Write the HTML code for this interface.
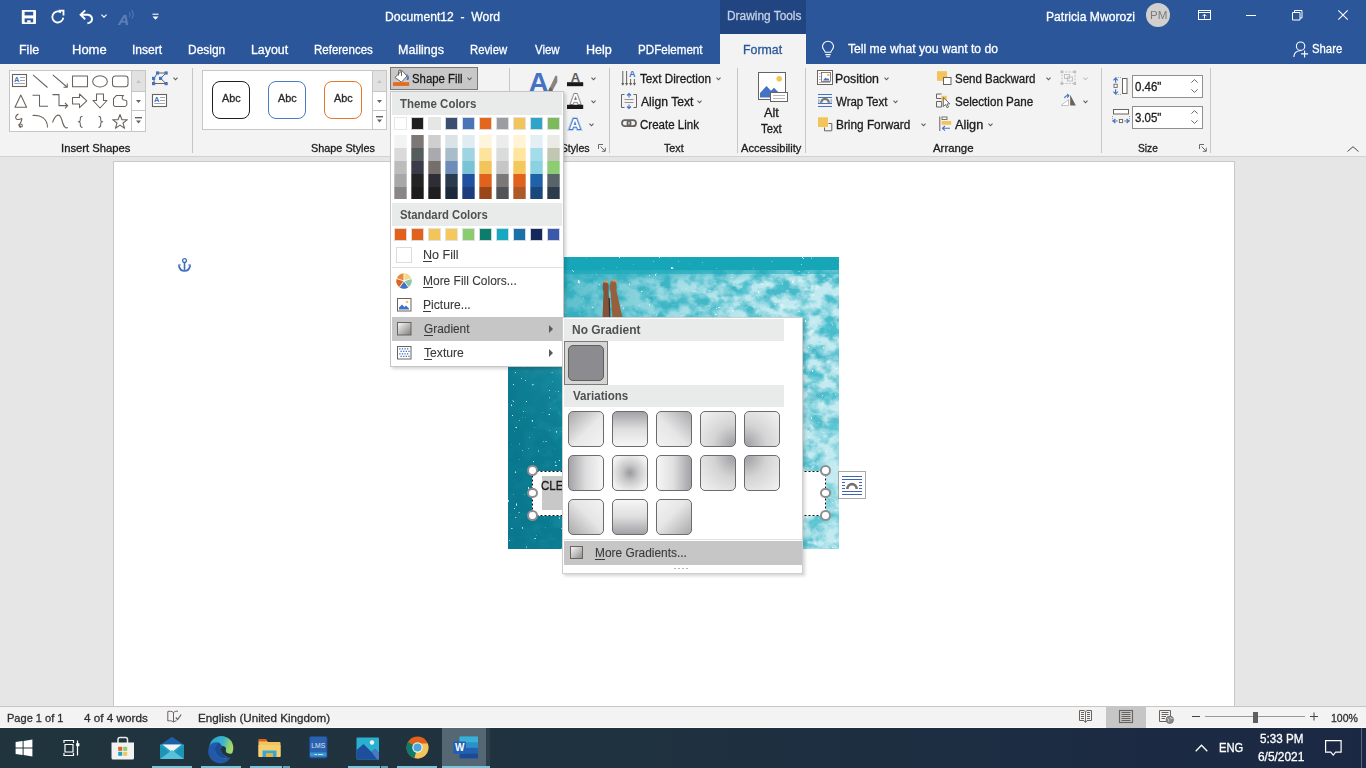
<!DOCTYPE html>
<html lang="en"><head><meta charset="utf-8"><title>Document12 - Word</title>
<style>
html,body{margin:0;padding:0;}
body{width:1366px;height:768px;overflow:hidden;position:relative;background:#e6e6e6;
font-family:"Liberation Sans",Arial,sans-serif;font-size:13px;color:#262626;}
div,span.t,svg.i{position:absolute;box-sizing:border-box;}
span.t{white-space:pre;transform-origin:0 50%;display:block;-webkit-text-stroke-width:0.300px;}
svg.i{overflow:visible;}
u{text-decoration:underline;text-underline-offset:1px;}
</style></head><body>
<div style="left:0px;top:0px;width:1366px;height:64px;background:#2b579a;"></div>
<div style="left:720px;top:0px;width:86px;height:34px;background:#214581;"></div>
<div style="left:720px;top:34px;width:86px;height:30px;background:#f3f3f3;"></div>
<div style="left:0px;top:64px;width:1366px;height:92px;background:#f3f3f3;"></div>
<div style="left:0px;top:156px;width:1366px;height:1px;background:#d2d2d2;"></div>
<div style="left:0px;top:157px;width:1366px;height:549px;background:#e6e6e6;"></div>
<div style="left:113px;top:161px;width:1122px;height:546px;background:#ffffff;border:1px solid #c8c8c8;border-bottom:0;"></div>
<div style="left:0px;top:706px;width:1366px;height:22px;background:#f3f3f3;border-top:1px solid #c6c6c6;"></div>
<div style="left:0px;top:727px;width:1366px;height:1px;background:#fbfbfb;"></div>
<div style="left:0px;top:728px;width:1366px;height:40px;background:linear-gradient(90deg,#20343e 0%,#1f323f 45%,#1c2c42 75%,#1b2844 100%);"></div>
<span class="t" style="left:385.31px;top:8.00px;font-size:13px;line-height:17px;color:#ffffff;font-weight:400;transform:scaleX(0.9326);">Document12  -  Word</span>
<span class="t" style="left:726.51px;top:8.30px;font-size:12px;line-height:16px;color:#c3cfe4;font-weight:400;transform:scaleX(0.9907);">Drawing Tools</span>
<span class="t" style="left:1046.31px;top:8.00px;font-size:13px;line-height:17px;color:#ffffff;font-weight:400;transform:scaleX(0.9332);">Patricia Mworozi</span>
<div style="left:1146px;top:3px;width:24px;height:24px;background:#d2d0ce;border-radius:50%;"></div>
<span class="t" style="left:1149.58px;top:8.00px;font-size:11px;line-height:15px;color:#7c7c7c;font-weight:400;transform:scaleX(1.0553);-webkit-text-stroke-width:0;">PM</span>
<span class="t" style="left:19.00px;top:41.65px;font-size:12.5px;line-height:16.5px;color:#ffffff;font-weight:400;transform:scaleX(0.9966);">File</span>
<span class="t" style="left:71.96px;top:41.65px;font-size:12.5px;line-height:16.5px;color:#ffffff;font-weight:400;transform:scaleX(1.0394);">Home</span>
<span class="t" style="left:131.91px;top:41.65px;font-size:12.5px;line-height:16.5px;color:#ffffff;font-weight:400;transform:scaleX(0.9647);">Insert</span>
<span class="t" style="left:188.04px;top:41.65px;font-size:12.5px;line-height:16.5px;color:#ffffff;font-weight:400;transform:scaleX(0.9578);">Design</span>
<span class="t" style="left:251.01px;top:41.65px;font-size:12.5px;line-height:16.5px;color:#ffffff;font-weight:400;transform:scaleX(0.9880);">Layout</span>
<span class="t" style="left:314.08px;top:41.65px;font-size:12.5px;line-height:16.5px;color:#ffffff;font-weight:400;transform:scaleX(0.9200);">References</span>
<span class="t" style="left:398.30px;top:41.65px;font-size:12.5px;line-height:16.5px;color:#ffffff;font-weight:400;transform:scaleX(1.0014);">Mailings</span>
<span class="t" style="left:470.40px;top:41.65px;font-size:12.5px;line-height:16.5px;color:#ffffff;font-weight:400;transform:scaleX(0.9050);">Review</span>
<span class="t" style="left:534.94px;top:41.65px;font-size:12.5px;line-height:16.5px;color:#ffffff;font-weight:400;transform:scaleX(0.9138);">View</span>
<span class="t" style="left:586.00px;top:41.65px;font-size:12.5px;line-height:16.5px;color:#ffffff;font-weight:400;transform:scaleX(1.0047);">Help</span>
<span class="t" style="left:638.37px;top:41.65px;font-size:12.5px;line-height:16.5px;color:#ffffff;font-weight:400;transform:scaleX(0.9287);">PDFelement</span>
<span class="t" style="left:743.01px;top:41.65px;font-size:12.5px;line-height:16.5px;color:#2b579a;font-weight:400;transform:scaleX(0.9870);">Format</span>
<span class="t" style="left:848.01px;top:40.10px;font-size:13px;line-height:17px;color:#ffffff;font-weight:400;transform:scaleX(0.9351);-webkit-text-stroke:0.300px #fff;">Tell me what you want to do</span>
<span class="t" style="left:1312.29px;top:41.05px;font-size:12.5px;line-height:16.5px;color:#ffffff;font-weight:400;transform:scaleX(0.9072);">Share</span>
<svg class="i" style="left:21px;top:9px;" width="16" height="16" viewBox="0 0 16 16"><rect x="0.800" y="1" width="14.200" height="14" rx="0.800" fill="#fff"/><rect x="3.600" y="2.800" width="8.600" height="3.600" fill="#2b579a"/><rect x="3.600" y="9.400" width="8.600" height="3.900" fill="#2b579a"/><rect x="6.200" y="11.300" width="3.400" height="2.200" fill="#fff"/></svg>
<svg class="i" style="left:50px;top:9px;" width="16" height="16" viewBox="0 0 16 16"><path d="M10.900 3.400A5.500 5.500 0 1 0 13.300 8.600" fill="none" stroke="#fff" stroke-width="1.800"/><path d="M8.600 1.600h4.900v4.900" fill="none" stroke="#fff" stroke-width="1.800"/></svg>
<svg class="i" style="left:79px;top:9px;" width="16" height="16" viewBox="0 0 16 16"><path d="M6.200 1.400L1.600 5.800l4.600 4.400" fill="none" stroke="#fff" stroke-width="1.900"/><path d="M2.200 5.800h6.800a5 4.300 0 0 1 1.200 8.100l-1.800 0.400" fill="none" stroke="#fff" stroke-width="1.900"/></svg>
<svg class="i" style="left:101px;top:14px;" width="6" height="4" viewBox="0 0 6 4"><path d="M0.4 0.6l2.6 2.6 2.6-2.6" fill="none" stroke="#fff" stroke-width="1.1"/></svg>
<svg class="i" style="left:118px;top:9px;" width="17" height="16" viewBox="0 0 17 16"><text x="0" y="15.5" font-family="Liberation Sans,sans-serif" font-weight="700" font-style="italic" font-size="15.500" fill="#5f7fb8">A</text><path d="M11.4 3.2a4 4 0 0 1 0 4.6M13.6 1a7 7 0 0 1 0 8.6" fill="none" stroke="#5f7db4" stroke-width="1"/></svg>
<svg class="i" style="left:152px;top:13px;" width="7" height="8" viewBox="0 0 7 8"><path d="M0.5 1.2h6" stroke="#fff" stroke-width="1.1"/><path d="M0.5 3.6h6L3.5 6.8z" fill="#fff"/></svg>
<svg class="i" style="left:821px;top:41px;" width="14" height="17" viewBox="0 0 14 17"><path d="M4.2 11.3c0-1.6-2.7-2.9-2.7-5.7a5.5 5.3 0 0 1 11 0c0 2.8-2.7 4.100-2.700 5.700z" fill="none" stroke="#fff" stroke-width="1.1"/><path d="M4.4 13.6h5.200M5.200 15.800h3.600" stroke="#fff" stroke-width="1.100"/></svg>
<svg class="i" style="left:1293px;top:41px;" width="16" height="17" viewBox="0 0 16 17"><circle cx="7.6" cy="5.2" r="4.2" fill="none" stroke="#fff" stroke-width="1.1"/><path d="M0.8 16c0.300-4.400 3-6.200 6.600-6.200" fill="none" stroke="#fff" stroke-width="1.100"/><path d="M11.600 9.400v7M8.100 12.900h7" stroke="#fff" stroke-width="1.1"/></svg>
<svg class="i" style="left:1198px;top:9px;" width="14" height="12" viewBox="0 0 14 12"><rect x="0.500" y="1.500" width="12" height="9" fill="none" stroke="#fff" stroke-width="1"/><path d="M0.500 3.500h12" stroke="#fff" stroke-width="1"/><path d="M6.500 9.500V5.400M4.500 7.200l2-2 2 2" fill="none" stroke="#fff" stroke-width="1"/></svg>
<div style="left:1246px;top:15px;width:10px;height:1px;background:#ffffff;"></div>
<svg class="i" style="left:1292px;top:10px;" width="11" height="11" viewBox="0 0 11 11"><path d="M0.500 2.500h7.500v7.500h-7.500z" fill="none" stroke="#fff" stroke-width="1"/><path d="M2.500 2.500v-2h7.500v7.500h-2" fill="none" stroke="#fff" stroke-width="1"/></svg>
<svg class="i" style="left:1338px;top:10px;" width="10" height="10" viewBox="0 0 10 10"><path d="M0.300 0.300l9.400 9.400M9.700 0.300L0.300 9.700" stroke="#fff" stroke-width="1.1"/></svg>
<div style="left:9px;top:70px;width:137px;height:62px;background:#ffffff;border:1px solid #c6c6c6;"></div>
<div style="left:131px;top:70px;width:15px;height:22px;background:#e1e1e1;border:1px solid #c6c6c6;"></div>
<div style="left:131px;top:91px;width:15px;height:20px;background:#ffffff;border:1px solid #c6c6c6;"></div>
<div style="left:131px;top:110px;width:15px;height:22px;background:#ffffff;border:1px solid #c6c6c6;"></div>
<svg class="i" style="left:136px;top:79.5px;" width="5" height="3" viewBox="0 0 5 3"><path d="M0 3h5L2.500 0z" fill="#c3c3c3"/></svg>
<svg class="i" style="left:136px;top:99.5px;" width="5" height="3" viewBox="0 0 5 3"><path d="M0 0h5L2.500 3z" fill="#6a625c"/></svg>
<svg class="i" style="left:135px;top:117.0px;" width="7" height="8" viewBox="0 0 7 8"><path d="M0 0.700h7" stroke="#6a625c" stroke-width="1.400"/><path d="M1 3.500h5L3.500 6.500z" fill="#6a625c"/></svg>
<svg class="i" style="left:12px;top:74px;" width="16" height="14" viewBox="0 0 16 14"><rect x="0.500" y="0.500" width="14" height="12" fill="#fff" stroke="#6a625c" stroke-width="1.100"/><text x="2" y="7.500" font-family="Liberation Sans,sans-serif" font-weight="700" font-size="7.500" fill="#4472c4">A</text><path d="M8 3.500h5M8 6.500h5M2.300 9.500h10.700" stroke="#9a9aa8" stroke-width="0.900"/></svg>
<svg class="i" style="left:9px;top:70px;" width="122" height="62" viewBox="0 0 122 62"><path d="M24 4.800L38.500 17.500" fill="none" stroke="#6a625c" stroke-width="1.05" stroke-linejoin="round"/><path d="M43.800 4.800L58 17M54.500 17.300H58.300V13.500" fill="none" stroke="#6a625c" stroke-width="1.05" stroke-linejoin="round"/><rect x="63.500" y="6" width="15" height="10.800" fill="none" stroke="#6a625c" stroke-width="1.05" stroke-linejoin="round"/><ellipse cx="91" cy="11.400" rx="7.300" ry="5.600" fill="none" stroke="#6a625c" stroke-width="1.05" stroke-linejoin="round"/><rect x="103.500" y="6" width="15.500" height="10.800" rx="2.800" fill="none" stroke="#6a625c" stroke-width="1.05" stroke-linejoin="round"/><path d="M6 37.300L11.800 25 17.600 37.300z" fill="none" stroke="#6a625c" stroke-width="1.05" stroke-linejoin="round"/><path d="M23.500 25.300H30.500V36.300H39" fill="none" stroke="#6a625c" stroke-width="1.05" stroke-linejoin="round"/><path d="M43.500 24.600H50V35.600H58.500M56 33L58.700 35.600 56 38.300" fill="none" stroke="#6a625c" stroke-width="1.05" stroke-linejoin="round"/><path d="M63.500 27.500H70.500V24L77.800 30.800 70.500 37.600V34H63.500z" fill="none" stroke="#6a625c" stroke-width="1.05" stroke-linejoin="round"/><path d="M87.500 24H94.500V30.500H98L91 38 84 30.500H87.500z" fill="none" stroke="#6a625c" stroke-width="1.05" stroke-linejoin="round"/><path d="M107.500 25.400H114.500C112.300 27.200 112.600 30.300 116.500 30.300A1.300 1.300 0 0 1 117.800 31.600V35L116.300 36.500H105.800L104.500 35.200V28.600z" fill="none" stroke="#6a625c" stroke-width="1.05" stroke-linejoin="round"/><path d="M9.500 44C5.500 46 6 50 9.500 49.500S13.500 47 12.500 50.500 9 55 11.500 56.500 14 54 11.500 54 9.500 55.500 11.500 58" fill="none" stroke="#6a625c" stroke-width="1.05" stroke-linejoin="round"/><path d="M23.500 45.500C32 44.500 38.500 49 38.500 57.500" fill="none" stroke="#6a625c" stroke-width="1.05" stroke-linejoin="round"/><path d="M43.500 52.500C47 43 51 43 53 50.500S57 58.500 58.800 57.500" fill="none" stroke="#6a625c" stroke-width="1.05" stroke-linejoin="round"/><path d="M73.500 46.200C71.300 46.200 71.300 47 71.300 48.500V50C71.300 51.200 70.800 51.800 69.300 51.800 70.800 51.800 71.300 52.400 71.300 53.600V55.100C71.300 56.600 71.300 57.400 73.500 57.400" fill="none" stroke="#6a625c" stroke-width="1.05" stroke-linejoin="round"/><path d="M89.500 46.200C91.700 46.200 91.700 47 91.700 48.500V50C91.700 51.200 92.200 51.800 93.700 51.800 92.200 51.800 91.700 52.400 91.700 53.600V55.100C91.700 56.600 91.700 57.400 89.500 57.400" fill="none" stroke="#6a625c" stroke-width="1.05" stroke-linejoin="round"/><path d="M111 44.500L112.900 49.700H118.400L114 53 115.600 58.300 111 55.100 106.400 58.300 108 53 103.600 49.700H109.100z" fill="none" stroke="#6a625c" stroke-width="1.05" stroke-linejoin="round"/></svg>
<svg class="i" style="left:152px;top:71px;" width="17" height="15" viewBox="0 0 17 15"><path d="M2 12.500H14L8.500 7.500 14 2H5.500L2 7.500z" fill="none" stroke="#6a625c" stroke-width="1"/><rect x="0" y="11" width="3.200" height="3.200" fill="#4472c4"/><rect x="12.5" y="11" width="3.200" height="3.200" fill="#4472c4"/><rect x="7" y="5.8" width="3.200" height="3.200" fill="#4472c4"/><rect x="12.5" y="0.4" width="3.200" height="3.200" fill="#4472c4"/><rect x="4" y="0.4" width="3.200" height="3.200" fill="#4472c4"/><rect x="0" y="5.8" width="3.200" height="3.200" fill="#4472c4"/></svg>
<svg class="i" style="left:173px;top:76.5px;" width="5" height="4" viewBox="0 0 5 4"><path d="M0.500 0.700l2 2.100 2-2.100" fill="none" stroke="#5a5a5a" stroke-width="1.100"/></svg>
<svg class="i" style="left:152px;top:94px;" width="16" height="14" viewBox="0 0 16 14"><rect x="0.500" y="0.500" width="14" height="12" fill="#fff" stroke="#6a625c" stroke-width="1.100"/><text x="2" y="7.500" font-family="Liberation Sans,sans-serif" font-weight="700" font-size="7.500" fill="#4472c4">A</text><path d="M8 3.500h5M8 6.500h5M2.300 9.500h10.700" stroke="#9a9aa8" stroke-width="0.900"/></svg>
<span class="t" style="left:61.16px;top:141.20px;font-size:10.8px;line-height:14.8px;color:#1c1c1c;font-weight:400;transform:scaleX(1.0427);">Insert Shapes</span>
<div style="left:192px;top:68px;width:1px;height:85px;background:#c6c6c6;"></div>
<div style="left:202px;top:70px;width:185px;height:60px;background:#ffffff;border:1px solid #c6c6c6;"></div>
<div style="left:372px;top:70px;width:15px;height:22px;background:#e1e1e1;border:1px solid #c6c6c6;"></div>
<div style="left:372px;top:91px;width:15px;height:20px;background:#ffffff;border:1px solid #c6c6c6;"></div>
<div style="left:372px;top:110px;width:15px;height:20px;background:#ffffff;border:1px solid #c6c6c6;"></div>
<svg class="i" style="left:377px;top:79.5px;" width="5" height="3" viewBox="0 0 5 3"><path d="M0 3h5L2.500 0z" fill="#c3c3c3"/></svg>
<svg class="i" style="left:377px;top:99.5px;" width="5" height="3" viewBox="0 0 5 3"><path d="M0 0h5L2.500 3z" fill="#6a625c"/></svg>
<svg class="i" style="left:376px;top:116.0px;" width="7" height="8" viewBox="0 0 7 8"><path d="M0 0.700h7" stroke="#6a625c" stroke-width="1.400"/><path d="M1 3.500h5L3.500 6.500z" fill="#6a625c"/></svg>
<div style="left:212px;top:81px;width:38px;height:38px;background:#ffffff;border:1.500px solid #1f1f1f;border-radius:8px;"></div>
<span class="t" style="left:222.00px;top:91.70px;font-size:10px;line-height:14px;color:#2a2a2a;font-weight:400;transform:scaleX(1.0824);">Abc</span>
<div style="left:268px;top:81px;width:38px;height:38px;background:#ffffff;border:1.500px solid #4a7bc8;border-radius:8px;"></div>
<span class="t" style="left:278.00px;top:91.70px;font-size:10px;line-height:14px;color:#2a2a2a;font-weight:400;transform:scaleX(1.0824);">Abc</span>
<div style="left:324px;top:81px;width:38px;height:38px;background:#ffffff;border:1.500px solid #e8762c;border-radius:8px;"></div>
<span class="t" style="left:334.00px;top:91.70px;font-size:10px;line-height:14px;color:#2a2a2a;font-weight:400;transform:scaleX(1.0824);">Abc</span>
<span class="t" style="left:310.90px;top:141.20px;font-size:10.8px;line-height:14.8px;color:#1c1c1c;font-weight:400;transform:scaleX(1.0046);">Shape Styles</span>
<div style="left:390px;top:67px;width:88px;height:23px;background:#c8c8c8;border:1px solid #7c7672;"></div>
<svg class="i" style="left:393px;top:69px;" width="17" height="18" viewBox="0 0 17 18"><path d="M9 1.500L2 8.500 8.500 13.200 14 7z" fill="#fff" stroke="#6a625c" stroke-width="1"/><path d="M5.500 6.500V2.500a1.500 1.500 0 0 1 3 0V7" fill="none" stroke="#6a625c" stroke-width="1"/><path d="M13.400 4.800c1.900 1.100 3 3 2.500 5-0.400 1.300-1.500 1.700-2.300 0.900l0.800-3.700z" fill="#4472c4"/><rect x="0" y="13.200" width="16.200" height="3.700" fill="#e8681c"/></svg>
<span class="t" style="left:411.97px;top:70.50px;font-size:12px;line-height:16px;color:#1c1c1c;font-weight:400;transform:scaleX(0.9462);">Shape Fill</span>
<svg class="i" style="left:466.5px;top:77px;" width="5" height="4" viewBox="0 0 5 4"><path d="M0.500 0.700l2 2.100 2-2.100" fill="none" stroke="#5a5a5a" stroke-width="1.100"/></svg>
<div style="left:509px;top:68px;width:1px;height:85px;background:#c6c6c6;"></div>
<svg class="i" style="left:529px;top:70px;" width="30" height="26" viewBox="0 0 30 26"><text x="9.500" y="22.300" font-family="Liberation Sans,sans-serif" font-weight="700" text-anchor="middle" font-size="28" fill="#4472c4">A</text><path d="M18.500 22.500L26.500 5.500 28.300 6.300 28.300 12 23 21.500z" fill="#8a8480"/><path d="M18.500 22.500l2.500-5.500 2.800 2.800-0.800 1.700z" fill="#6a625c"/></svg>
<svg class="i" style="left:566px;top:71px;" width="18" height="16" viewBox="0 0 18 16"><text x="9.400" y="10.500" font-family="Liberation Sans,sans-serif" font-weight="700" text-anchor="middle" font-size="13" fill="#5c5c5c">A</text><rect x="1" y="11.200" width="16.200" height="4" fill="#1a1a1a"/></svg>
<svg class="i" style="left:590.5px;top:76.5px;" width="5" height="4" viewBox="0 0 5 4"><path d="M0.500 0.700l2 2.100 2-2.100" fill="none" stroke="#5a5a5a" stroke-width="1.100"/></svg>
<svg class="i" style="left:566px;top:92px;" width="18" height="18" viewBox="0 0 18 18"><text x="9.400" y="11.600" font-family="Liberation Sans,sans-serif" font-weight="700" text-anchor="middle" font-size="14.500" fill="#fff" stroke="#707070" stroke-width="1.700" style="paint-order:stroke">A</text><rect x="1" y="12.800" width="16.200" height="4.200" fill="#1a1a1a"/></svg>
<svg class="i" style="left:590.5px;top:99.5px;" width="5" height="4" viewBox="0 0 5 4"><path d="M0.500 0.700l2 2.100 2-2.100" fill="none" stroke="#5a5a5a" stroke-width="1.100"/></svg>
<svg class="i" style="left:566px;top:115px;" width="18" height="16" viewBox="0 0 18 16"><text x="9" y="14.200" font-family="Liberation Sans,sans-serif" font-weight="700" text-anchor="middle" font-size="15" fill="#fff" stroke="#a8cff0" stroke-width="4" opacity="0.800">A</text><text x="9" y="14.200" font-family="Liberation Sans,sans-serif" font-weight="700" text-anchor="middle" font-size="15" fill="#fff" stroke="#4472c4" stroke-width="1.900" style="paint-order:stroke">A</text></svg>
<svg class="i" style="left:588.5px;top:122.5px;" width="5" height="4" viewBox="0 0 5 4"><path d="M0.500 0.700l2 2.100 2-2.100" fill="none" stroke="#5a5a5a" stroke-width="1.100"/></svg>
<span class="t" style="left:518.94px;top:141.20px;font-size:10.8px;line-height:14.8px;color:#1c1c1c;font-weight:400;transform:scaleX(0.9841);">WordArt Styles</span>
<svg class="i" style="left:598px;top:144px;" width="8" height="8" viewBox="0 0 8 8"><path d="M0.500 5V0.500H5" fill="none" stroke="#6a6a6a" stroke-width="1"/><path d="M2.600 2.600L7 7M7.300 3.800V7.300H3.800" fill="none" stroke="#6a6a6a" stroke-width="1"/></svg>
<div style="left:609px;top:68px;width:1px;height:85px;background:#c6c6c6;"></div>
<svg class="i" style="left:621px;top:70px;" width="16" height="17" viewBox="0 0 16 17"><path d="M1.800 1v14M5.600 1v14M9.600 9v6M13.400 9v6" stroke="#6a625c" stroke-width="1"/><path d="M0.200 13l1.600 2.800L3.400 13zM4 13l1.600 2.800 1.600-2.800zM8 13l1.600 2.800 1.600-2.800zM11.800 13l1.600 2.800 1.600-2.800z" fill="#6a625c"/><text x="8" y="7.400" font-family="Liberation Sans,sans-serif" font-weight="700" font-size="9" fill="#4472c4">A</text></svg>
<span class="t" style="left:640.36px;top:70.50px;font-size:12px;line-height:16px;color:#1c1c1c;font-weight:400;transform:scaleX(0.9759);">Text Direction</span>
<svg class="i" style="left:716px;top:77px;" width="5" height="4" viewBox="0 0 5 4"><path d="M0.500 0.700l2 2.100 2-2.100" fill="none" stroke="#5a5a5a" stroke-width="1.100"/></svg>
<svg class="i" style="left:621px;top:93px;" width="16" height="16" viewBox="0 0 16 16"><path d="M3.500 1.500h-3v13h3M12.500 1.500h3v13h-3" fill="none" stroke="#6a625c" stroke-width="1"/><path d="M3.500 6.500h9M3.500 9.500h9" stroke="#8a8a8a" stroke-width="0.900"/><path d="M8 0.500v4M6 2.500l2-2 2 2M8 15.500v-4M6 13.500l2 2 2-2" fill="none" stroke="#4472c4" stroke-width="1.100"/></svg>
<span class="t" style="left:640.60px;top:93.50px;font-size:12px;line-height:16px;color:#1c1c1c;font-weight:400;transform:scaleX(1.0126);">Align Text</span>
<svg class="i" style="left:696.5px;top:100px;" width="5" height="4" viewBox="0 0 5 4"><path d="M0.500 0.700l2 2.100 2-2.100" fill="none" stroke="#5a5a5a" stroke-width="1.100"/></svg>
<svg class="i" style="left:621px;top:119px;" width="16" height="9" viewBox="0 0 16 9"><rect x="1" y="1.200" width="8.600" height="6" rx="3" fill="none" stroke="#6a625c" stroke-width="1.800"/><rect x="6.400" y="1.200" width="8.600" height="6" rx="3" fill="none" stroke="#6a625c" stroke-width="1.800"/></svg>
<span class="t" style="left:640.00px;top:116.50px;font-size:12px;line-height:16px;color:#1c1c1c;font-weight:400;transform:scaleX(0.9613);">Create Link</span>
<span class="t" style="left:664.05px;top:141.20px;font-size:10.8px;line-height:14.8px;color:#1c1c1c;font-weight:400;transform:scaleX(0.9949);">Text</span>
<div style="left:737px;top:68px;width:1px;height:85px;background:#c6c6c6;"></div>
<svg class="i" style="left:757px;top:71px;" width="32" height="32" viewBox="0 0 32 32"><rect x="1.500" y="1.500" width="27" height="27" fill="#fff" stroke="#6a625c" stroke-width="1"/><circle cx="22.200" cy="7.800" r="2.800" fill="#f2c45a"/><path d="M3 26.500V22L9.500 15l4.500 4.700 3-3 4.200 4.300V26.500z" fill="#4472c4"/><rect x="13.500" y="21.500" width="17" height="9" fill="#fff" stroke="#6a625c" stroke-width="1"/><path d="M16 24.500h12M16 27.500h12" stroke="#b0b0b0" stroke-width="0.900"/></svg>
<span class="t" style="left:764.20px;top:104.50px;font-size:12px;line-height:16px;color:#1c1c1c;font-weight:400;transform:scaleX(1.0619);">Alt</span>
<span class="t" style="left:761.36px;top:120.50px;font-size:12px;line-height:16px;color:#1c1c1c;font-weight:400;transform:scaleX(0.9406);">Text</span>
<span class="t" style="left:741.30px;top:141.20px;font-size:10.8px;line-height:14.8px;color:#1c1c1c;font-weight:400;transform:scaleX(1.0276);">Accessibility</span>
<div style="left:805px;top:68px;width:1px;height:85px;background:#c6c6c6;"></div>
<svg class="i" style="left:817px;top:70px;" width="16" height="15" viewBox="0 0 16 15"><rect x="0.500" y="0.500" width="15" height="14" fill="#fff" stroke="#6a625c" stroke-width="1"/><rect x="4.500" y="2.500" width="9" height="9" fill="#fff" stroke="#6a625c" stroke-width="0.800"/><path d="M6 10.500l2.500-3 1.500 1.500 1-1 1.500 2.500z" fill="#4472c4"/><rect x="10" y="4" width="2.400" height="2" fill="#f2c45a"/><path d="M2 3.500h1.500M2 6.500h1.500M2 9.500h1.500M2 12.500h11" stroke="#9a9a9a" stroke-width="0.800"/></svg>
<span class="t" style="left:835.47px;top:70.50px;font-size:12px;line-height:16px;color:#1c1c1c;font-weight:400;transform:scaleX(1.0300);">Position</span>
<svg class="i" style="left:883.5px;top:77px;" width="5" height="4" viewBox="0 0 5 4"><path d="M0.500 0.700l2 2.100 2-2.100" fill="none" stroke="#5a5a5a" stroke-width="1.100"/></svg>
<svg class="i" style="left:818px;top:93px;" width="14" height="14" viewBox="0 0 14 14"><path d="M0 1.500h14M0 4.500h14M0 10.500h14M0 13.500h14" stroke="#4472c4" stroke-width="1"/><path d="M0 7h1.500M0 9h1.500M12.500 7H14M12.500 9H14" stroke="#4472c4" stroke-width="0.900"/><path d="M3.200 9.800A3.800 3.900 0 0 1 10.800 9.800" fill="none" stroke="#7a746f" stroke-width="2.400"/></svg>
<span class="t" style="left:836.44px;top:93.50px;font-size:12px;line-height:16px;color:#1c1c1c;font-weight:400;transform:scaleX(0.9581);">Wrap Text</span>
<svg class="i" style="left:893px;top:100px;" width="5" height="4" viewBox="0 0 5 4"><path d="M0.500 0.700l2 2.100 2-2.100" fill="none" stroke="#5a5a5a" stroke-width="1.100"/></svg>
<svg class="i" style="left:818px;top:117px;" width="15" height="15" viewBox="0 0 15 15"><path d="M6.500 10.500v3.300h7.300V6.500H10.500" fill="none" stroke="#6a625c" stroke-width="1"/><rect x="0" y="0.300" width="10" height="9.700" fill="#f2c45a"/></svg>
<span class="t" style="left:835.51px;top:116.50px;font-size:12px;line-height:16px;color:#1c1c1c;font-weight:400;transform:scaleX(0.9856);">Bring Forward</span>
<svg class="i" style="left:921px;top:123px;" width="5" height="4" viewBox="0 0 5 4"><path d="M0.500 0.700l2 2.100 2-2.100" fill="none" stroke="#5a5a5a" stroke-width="1.100"/></svg>
<svg class="i" style="left:936px;top:71px;" width="16" height="15" viewBox="0 0 16 15"><rect x="1" y="0.200" width="10" height="9.600" fill="#f2c45a"/><rect x="7.500" y="6.500" width="7.500" height="7" fill="#fff" stroke="#6a625c" stroke-width="1"/></svg>
<span class="t" style="left:954.76px;top:70.50px;font-size:12px;line-height:16px;color:#1c1c1c;font-weight:400;transform:scaleX(0.9566);">Send Backward</span>
<svg class="i" style="left:1046px;top:77px;" width="5" height="4" viewBox="0 0 5 4"><path d="M0.500 0.700l2 2.100 2-2.100" fill="none" stroke="#5a5a5a" stroke-width="1.100"/></svg>
<svg class="i" style="left:935px;top:93px;" width="17" height="17" viewBox="0 0 17 17"><path d="M6.500 1H1.500v4.500h5M1.500 8.500h5.200v5.500H1.500z" fill="none" stroke="#6a625c" stroke-width="1"/><rect x="6.500" y="2.800" width="5.300" height="5" fill="#f2c45a"/><path d="M8.300 4.500v9l2.300-2 1.500 3.200 1.400-0.700-1.500-3 2.800-0.200z" fill="#fff" stroke="#5a5a5a" stroke-width="0.900" stroke-linejoin="round"/></svg>
<span class="t" style="left:954.75px;top:93.50px;font-size:12px;line-height:16px;color:#1c1c1c;font-weight:400;transform:scaleX(0.9695);">Selection Pane</span>
<svg class="i" style="left:939px;top:116px;" width="14" height="16" viewBox="0 0 14 16"><path d="M0.800 0.500v14.500" stroke="#6a625c" stroke-width="1"/><rect x="3" y="1" width="5" height="2.500" fill="#fff" stroke="#6a625c" stroke-width="0.900"/><rect x="2.600" y="5" width="9.600" height="3.800" fill="#f2c45a"/><path d="M11 12.300H3.500M6 10L3.500 12.300 6 14.600" fill="none" stroke="#4472c4" stroke-width="1.100"/></svg>
<span class="t" style="left:955.30px;top:116.50px;font-size:12px;line-height:16px;color:#1c1c1c;font-weight:400;transform:scaleX(1.0589);">Align</span>
<svg class="i" style="left:987.5px;top:123px;" width="5" height="4" viewBox="0 0 5 4"><path d="M0.500 0.700l2 2.100 2-2.100" fill="none" stroke="#5a5a5a" stroke-width="1.100"/></svg>
<svg class="i" style="left:1060px;top:70px;" width="17" height="16" viewBox="0 0 17 16"><rect x="2" y="2" width="13" height="11.500" fill="none" stroke="#bdbdbd" stroke-width="0.900" stroke-dasharray="2 1.200"/><rect x="4.500" y="4.500" width="5" height="4" fill="none" stroke="#bdbdbd" stroke-width="0.900"/><rect x="7.500" y="7" width="5" height="4" fill="none" stroke="#bdbdbd" stroke-width="0.900"/><rect x="0.5" y="0.5" width="2.600" height="2.600" fill="#bdbdbd"/><rect x="13.5" y="0.5" width="2.600" height="2.600" fill="#bdbdbd"/><rect x="0.5" y="12.3" width="2.600" height="2.600" fill="#bdbdbd"/><rect x="13.5" y="12.3" width="2.600" height="2.600" fill="#bdbdbd"/></svg>
<svg class="i" style="left:1082.5px;top:77px;" width="5" height="4" viewBox="0 0 5 4"><path d="M0.500 0.700l2 2.100 2-2.100" fill="none" stroke="#c0c0c0" stroke-width="1.100"/></svg>
<svg class="i" style="left:1060px;top:94px;" width="17" height="13" viewBox="0 0 17 13"><path d="M1 11.500h7.500V5.500z" fill="#fff" stroke="#bcbcbc" stroke-width="0.900"/><path d="M10.200 11.500h5.600L10.200 0.800z" fill="#6a625c"/><path d="M4.500 4.200C5 1.800 7 1.400 8.600 1.800M7.200 0l1.700 1.800L7.200 3.600" fill="none" stroke="#4472c4" stroke-width="1.100"/></svg>
<svg class="i" style="left:1082.5px;top:100px;" width="5" height="4" viewBox="0 0 5 4"><path d="M0.500 0.700l2 2.100 2-2.100" fill="none" stroke="#5a5a5a" stroke-width="1.100"/></svg>
<span class="t" style="left:933.40px;top:141.20px;font-size:10.8px;line-height:14.8px;color:#1c1c1c;font-weight:400;transform:scaleX(1.0553);">Arrange</span>
<div style="left:1101px;top:68px;width:1px;height:85px;background:#c6c6c6;"></div>
<svg class="i" style="left:1112px;top:77px;" width="18" height="18" viewBox="0 0 18 18"><rect x="10.500" y="1.500" width="4.500" height="15" fill="#fff" stroke="#6a625c" stroke-width="1"/><path d="M3.500 0.500h6M3.500 17.500h6" stroke="#8a8a8a" stroke-width="0.900" stroke-dasharray="1 1.200"/><rect x="2" y="7.200" width="3.200" height="3.200" fill="#fff" stroke="#6a625c" stroke-width="0.900"/><path d="M3.600 1.200v4.500M1.400 3.400l2.200-2.200 2.200 2.200M3.600 16.800v-4.500M1.400 14.600l2.200 2.200 2.200-2.200" fill="none" stroke="#4472c4" stroke-width="1.200"/></svg>
<div style="left:1132px;top:75px;width:71px;height:23px;background:#ffffff;border:1px solid #8f8f8f;"></div>
<span class="t" style="left:1134.88px;top:78.50px;font-size:12px;line-height:16px;color:#1c1c1c;font-weight:400;transform:scaleX(0.9555);">0.46&quot;</span>
<svg class="i" style="left:1191px;top:79px;" width="7" height="4" viewBox="0 0 7 4"><path d="M0.400 3.600l3.100-3 3.100 3" fill="none" stroke="#6a6a6a" stroke-width="1"/></svg>
<svg class="i" style="left:1191px;top:89px;" width="7" height="4" viewBox="0 0 7 4"><path d="M0.400 0.400l3.100 3 3.100-3" fill="none" stroke="#6a6a6a" stroke-width="1"/></svg>
<svg class="i" style="left:1112px;top:108px;" width="18" height="18" viewBox="0 0 18 18"><rect x="1.500" y="1.500" width="15" height="4.500" fill="#fff" stroke="#6a625c" stroke-width="1"/><path d="M0.500 8v6M17.500 8v6" stroke="#8a8a8a" stroke-width="0.900" stroke-dasharray="1 1.200"/><rect x="7.400" y="11.400" width="3.200" height="3.200" fill="#fff" stroke="#6a625c" stroke-width="0.900"/><path d="M1.200 13h4.500M3.400 10.800l-2.200 2.200 2.200 2.200M16.800 13h-4.500M14.600 10.800l2.200 2.200-2.200 2.200" fill="none" stroke="#4472c4" stroke-width="1.200"/></svg>
<div style="left:1132px;top:106px;width:71px;height:23px;background:#ffffff;border:1px solid #8f8f8f;"></div>
<span class="t" style="left:1134.88px;top:109.50px;font-size:12px;line-height:16px;color:#1c1c1c;font-weight:400;transform:scaleX(0.9555);">3.05&quot;</span>
<svg class="i" style="left:1191px;top:110px;" width="7" height="4" viewBox="0 0 7 4"><path d="M0.400 3.600l3.100-3 3.100 3" fill="none" stroke="#6a6a6a" stroke-width="1"/></svg>
<svg class="i" style="left:1191px;top:120px;" width="7" height="4" viewBox="0 0 7 4"><path d="M0.400 0.400l3.100 3 3.100-3" fill="none" stroke="#6a6a6a" stroke-width="1"/></svg>
<span class="t" style="left:1137.93px;top:141.20px;font-size:10.8px;line-height:14.8px;color:#1c1c1c;font-weight:400;transform:scaleX(0.9470);">Size</span>
<svg class="i" style="left:1199px;top:144px;" width="8" height="8" viewBox="0 0 8 8"><path d="M0.500 5V0.500H5" fill="none" stroke="#6a6a6a" stroke-width="1"/><path d="M2.600 2.600L7 7M7.300 3.800V7.300H3.800" fill="none" stroke="#6a6a6a" stroke-width="1"/></svg>
<div style="left:1210px;top:68px;width:1px;height:85px;background:#c6c6c6;"></div>
<svg class="i" style="left:1347px;top:146px;" width="12" height="6" viewBox="0 0 12 6"><path d="M0.500 5.500L6 0.700l5.500 4.800" fill="none" stroke="#4a4a4a" stroke-width="1"/></svg>
<svg class="i" style="left:508px;top:257px;overflow:hidden;" width="331" height="292" viewBox="0 0 331 292"><defs><linearGradient id="pg" x1="0" y1="0" x2="1" y2="0"><stop offset="0" stop-color="#08768c"/><stop offset="0.200" stop-color="#0b7f95"/><stop offset="0.550" stop-color="#25a3b6"/><stop offset="0.800" stop-color="#4cbccb"/><stop offset="1" stop-color="#66c6d3"/></linearGradient><linearGradient id="pt" x1="0" y1="0" x2="0" y2="1"><stop offset="0" stop-color="#3fb6c6" stop-opacity="1"/><stop offset="0.220" stop-color="#4bbccb" stop-opacity="1"/><stop offset="0.400" stop-color="#35afc0" stop-opacity="0.600"/><stop offset="0.650" stop-color="#2aa8ba" stop-opacity="0"/></linearGradient><filter id="foam" x="0" y="0" width="100%" height="100%"><feTurbulence type="fractalNoise" baseFrequency="0.060 0.075" numOctaves="4" seed="7" result="n"/><feColorMatrix in="n" type="matrix" values="0 0 0 0 0.540  0 0 0 0 0.820  0 0 0 0 0.870  3 0 0 0 -0.900"/></filter><filter id="foam2" x="0" y="0" width="100%" height="100%"><feTurbulence type="fractalNoise" baseFrequency="0.090 0.110" numOctaves="3" seed="15" result="n"/><feColorMatrix in="n" type="matrix" values="0 0 0 0 0.700  0 0 0 0 0.890  0 0 0 0 0.920  4 0 0 0 -2.500"/></filter><filter id="dark" x="0" y="0" width="100%" height="100%"><feTurbulence type="fractalNoise" baseFrequency="0.070 0.090" numOctaves="3" seed="21" result="n"/><feColorMatrix in="n" type="matrix" values="0 0 0 0 0.090  0 0 0 0 0.640  0 0 0 0 0.730  0 4 0 0 -1.800"/></filter><filter id="spk" x="0" y="0" width="100%" height="100%"><feTurbulence type="fractalNoise" baseFrequency="0.300" numOctaves="2" seed="3" result="n"/><feColorMatrix in="n" type="matrix" values="0 0 0 0 0.850  0 0 0 0 0.960  0 0 0 0 0.980  14 0 0 0 -10.600"/></filter><linearGradient id="dl" x1="0" y1="0" x2="1" y2="0"><stop offset="0" stop-color="#09778d" stop-opacity="0.900"/><stop offset="0.120" stop-color="#0a7a90" stop-opacity="0.700"/><stop offset="0.300" stop-color="#0d8298" stop-opacity="0"/></linearGradient><linearGradient id="tl" x1="0" y1="0" x2="1" y2="0"><stop offset="0" stop-color="#139db1" stop-opacity="0.750"/><stop offset="0.220" stop-color="#18a3b6" stop-opacity="0.550"/><stop offset="0.550" stop-color="#1aa6b8" stop-opacity="0.150"/><stop offset="0.800" stop-color="#1aa6b8" stop-opacity="0"/></linearGradient><linearGradient id="ml" x1="0" y1="0" x2="1" y2="0"><stop offset="0" stop-color="#fff" stop-opacity="0"/><stop offset="0.500" stop-color="#fff" stop-opacity="0.050"/><stop offset="0.880" stop-color="#fff" stop-opacity="1"/></linearGradient><linearGradient id="mt" x1="0" y1="0" x2="0" y2="1"><stop offset="0" stop-color="#fff" stop-opacity="0"/><stop offset="0.045" stop-color="#fff" stop-opacity="0"/><stop offset="0.085" stop-color="#fff" stop-opacity="1"/><stop offset="0.280" stop-color="#fff" stop-opacity="1"/><stop offset="0.420" stop-color="#fff" stop-opacity="0"/></linearGradient><mask id="m1"><rect width="331" height="292" fill="url(#mt)"/><rect width="331" height="292" fill="url(#ml)"/></mask></defs><rect width="331" height="292" fill="url(#pg)"/><rect width="331" height="292" fill="url(#pt)"/><rect width="331" height="292" filter="url(#dark)" opacity="0.280"/><g mask="url(#m1)"><rect width="331" height="292" filter="url(#foam)"/><rect width="331" height="292" filter="url(#foam2)"/></g><rect y="13" width="331" height="90" fill="url(#tl)"/><rect y="100" width="331" height="192" fill="url(#dl)"/><rect width="331" height="13" fill="#17a5b8"/><rect y="13" width="331" height="4" fill="#17a5b8" opacity="0.550"/><rect width="331" height="292" filter="url(#spk)" opacity="0.900"/><path d="M94.500 61l1-26c-1.500-5-1-10 1.500-11s4.500 4 3.500 9.500l1.500 27.500z" fill="#85533a"/><path d="M104.500 61l-2-26.500c-1.500-6 0-11 2.500-11.500s4.500 5 3.500 10.500l6 27.500z" fill="#96603e"/><path d="M96.500 25.500c1-2 2.500-1.500 3.500 0.500M104.500 24.500c1.500-2 3-1.500 4 0.500" stroke="#d89858" stroke-width="1.800" fill="none"/><path d="M101.800 61l-0.600-20" stroke="#3a2a24" stroke-width="1.200" fill="none"/></svg>
<div style="left:532px;top:471px;width:294px;height:45px;background:#ffffff;"></div>
<svg class="i" style="left:532px;top:471px;" width="294" height="45" viewBox="0 0 294 45"><rect x="0.500" y="0.500" width="293" height="44" fill="none" stroke="#111" stroke-width="1" stroke-dasharray="2 2"/></svg>
<div style="left:542px;top:476px;width:100px;height:34px;background:#c8c8c8;"></div>
<span class="t" style="left:541.24px;top:477.30px;font-size:13px;line-height:17px;color:#1a1a1a;font-weight:400;transform:scaleX(0.8912);">CLE</span>
<div style="left:526.9px;top:465.3px;width:10.8px;height:10.8px;background:#ffffff;border:2.200px solid #8e8e92;border-radius:50%;"></div>
<div style="left:526.9px;top:487.6px;width:10.8px;height:10.8px;background:#ffffff;border:2.200px solid #8e8e92;border-radius:50%;"></div>
<div style="left:526.9px;top:509.9px;width:10.8px;height:10.8px;background:#ffffff;border:2.200px solid #8e8e92;border-radius:50%;"></div>
<div style="left:820.1px;top:465.3px;width:10.8px;height:10.8px;background:#ffffff;border:2.200px solid #8e8e92;border-radius:50%;"></div>
<div style="left:820.1px;top:487.6px;width:10.8px;height:10.8px;background:#ffffff;border:2.200px solid #8e8e92;border-radius:50%;"></div>
<div style="left:820.1px;top:509.9px;width:10.8px;height:10.8px;background:#ffffff;border:2.200px solid #8e8e92;border-radius:50%;"></div>
<div style="left:838px;top:471px;width:28px;height:28px;background:#ffffff;border:1px solid #a8a8a8;"></div>
<svg class="i" style="left:842px;top:476px;" width="20" height="19" viewBox="0 0 20 19"><path d="M0 0.500h20M0 3.500h20M0 15.500h20M0 18.500h20" stroke="#3f66b0" stroke-width="1"/><path d="M0 6.500h3M0 9.500h3M0 12.500h3M17 6.500h3M17 9.500h3M17 12.500h3" stroke="#3f66b0" stroke-width="1"/><path d="M5.300 13A4.700 4.900 0 0 1 14.700 13" fill="none" stroke="#7a706a" stroke-width="2.600"/></svg>
<svg class="i" style="left:178px;top:258px;" width="13" height="14" viewBox="0 0 13 14"><circle cx="6.500" cy="2.600" r="1.900" fill="#fff" stroke="#3f6db8" stroke-width="1.300"/><path d="M6.500 4.500V12.500" stroke="#3f6db8" stroke-width="1.600"/><path d="M0.800 7.500C1.500 11.500 4 13 6.500 13S11.500 11.500 12.200 7.500" fill="none" stroke="#3f6db8" stroke-width="1.700"/><path d="M0 7h2.800M10.200 7H13" stroke="#3f6db8" stroke-width="1.200"/></svg>
<div style="left:390px;top:91px;width:174px;height:276px;background:#ffffff;border:1px solid #c6c6c6;box-shadow:2px 2px 3px rgba(0,0,0,0.170);"></div>
<div style="left:392px;top:92px;width:170px;height:23px;background:#e9ebeb;"></div>
<span class="t" style="left:400.28px;top:96.00px;font-size:12px;line-height:16px;color:#505052;font-weight:700;transform:scaleX(0.9550);-webkit-text-stroke-width:0;">Theme Colors</span>
<div style="left:394px;top:117px;width:13px;height:13px;background:#ffffff;border:1px solid rgba(226,228,231,0.900);"></div>
<div style="left:394px;top:135px;width:13px;height:64px;border:1px solid rgba(226,228,231,0.900);"></div>
<div style="left:394px;top:135px;width:13px;height:13px;background:#f3f3f3;border-left:1px solid rgba(255,255,255,0.300);border-right:1px solid rgba(255,255,255,0.300);"></div>
<div style="left:394px;top:148px;width:13px;height:13px;background:#dadada;border-left:1px solid rgba(255,255,255,0.300);border-right:1px solid rgba(255,255,255,0.300);"></div>
<div style="left:394px;top:161px;width:13px;height:13px;background:#bcbcbc;border-left:1px solid rgba(255,255,255,0.300);border-right:1px solid rgba(255,255,255,0.300);"></div>
<div style="left:394px;top:174px;width:13px;height:13px;background:#a8a8aa;border-left:1px solid rgba(255,255,255,0.300);border-right:1px solid rgba(255,255,255,0.300);"></div>
<div style="left:394px;top:187px;width:13px;height:12px;background:#8a8684;border-left:1px solid rgba(255,255,255,0.300);border-right:1px solid rgba(255,255,255,0.300);"></div>
<div style="left:411px;top:117px;width:13px;height:13px;background:#1f1f1f;border:1px solid rgba(226,228,231,0.900);"></div>
<div style="left:411px;top:135px;width:13px;height:64px;border:1px solid rgba(226,228,231,0.900);"></div>
<div style="left:411px;top:135px;width:13px;height:13px;background:#7b7876;border-left:1px solid rgba(255,255,255,0.300);border-right:1px solid rgba(255,255,255,0.300);"></div>
<div style="left:411px;top:148px;width:13px;height:13px;background:#555c5e;border-left:1px solid rgba(255,255,255,0.300);border-right:1px solid rgba(255,255,255,0.300);"></div>
<div style="left:411px;top:161px;width:13px;height:13px;background:#3a3a48;border-left:1px solid rgba(255,255,255,0.300);border-right:1px solid rgba(255,255,255,0.300);"></div>
<div style="left:411px;top:174px;width:13px;height:13px;background:#232323;border-left:1px solid rgba(255,255,255,0.300);border-right:1px solid rgba(255,255,255,0.300);"></div>
<div style="left:411px;top:187px;width:13px;height:12px;background:#1c1c1c;border-left:1px solid rgba(255,255,255,0.300);border-right:1px solid rgba(255,255,255,0.300);"></div>
<div style="left:428px;top:117px;width:13px;height:13px;background:#e6e6e6;border:1px solid rgba(226,228,231,0.900);"></div>
<div style="left:428px;top:135px;width:13px;height:64px;border:1px solid rgba(226,228,231,0.900);"></div>
<div style="left:428px;top:135px;width:13px;height:13px;background:#cfcfcf;border-left:1px solid rgba(255,255,255,0.300);border-right:1px solid rgba(255,255,255,0.300);"></div>
<div style="left:428px;top:148px;width:13px;height:13px;background:#aaaaae;border-left:1px solid rgba(255,255,255,0.300);border-right:1px solid rgba(255,255,255,0.300);"></div>
<div style="left:428px;top:161px;width:13px;height:13px;background:#756e6a;border-left:1px solid rgba(255,255,255,0.300);border-right:1px solid rgba(255,255,255,0.300);"></div>
<div style="left:428px;top:174px;width:13px;height:13px;background:#2e2e36;border-left:1px solid rgba(255,255,255,0.300);border-right:1px solid rgba(255,255,255,0.300);"></div>
<div style="left:428px;top:187px;width:13px;height:12px;background:#1e1e1e;border-left:1px solid rgba(255,255,255,0.300);border-right:1px solid rgba(255,255,255,0.300);"></div>
<div style="left:445px;top:117px;width:13px;height:13px;background:#3a4e70;border:1px solid rgba(226,228,231,0.900);"></div>
<div style="left:445px;top:135px;width:13px;height:64px;border:1px solid rgba(226,228,231,0.900);"></div>
<div style="left:445px;top:135px;width:13px;height:13px;background:#dbe3e7;border-left:1px solid rgba(255,255,255,0.300);border-right:1px solid rgba(255,255,255,0.300);"></div>
<div style="left:445px;top:148px;width:13px;height:13px;background:#a9bcc9;border-left:1px solid rgba(255,255,255,0.300);border-right:1px solid rgba(255,255,255,0.300);"></div>
<div style="left:445px;top:161px;width:13px;height:13px;background:#6f8cb8;border-left:1px solid rgba(255,255,255,0.300);border-right:1px solid rgba(255,255,255,0.300);"></div>
<div style="left:445px;top:174px;width:13px;height:13px;background:#2c3a4e;border-left:1px solid rgba(255,255,255,0.300);border-right:1px solid rgba(255,255,255,0.300);"></div>
<div style="left:445px;top:187px;width:13px;height:12px;background:#1c2a3c;border-left:1px solid rgba(255,255,255,0.300);border-right:1px solid rgba(255,255,255,0.300);"></div>
<div style="left:462px;top:117px;width:13px;height:13px;background:#4a74b8;border:1px solid rgba(226,228,231,0.900);"></div>
<div style="left:462px;top:135px;width:13px;height:64px;border:1px solid rgba(226,228,231,0.900);"></div>
<div style="left:462px;top:135px;width:13px;height:13px;background:#dfedf2;border-left:1px solid rgba(255,255,255,0.300);border-right:1px solid rgba(255,255,255,0.300);"></div>
<div style="left:462px;top:148px;width:13px;height:13px;background:#9fd4e2;border-left:1px solid rgba(255,255,255,0.300);border-right:1px solid rgba(255,255,255,0.300);"></div>
<div style="left:462px;top:161px;width:13px;height:13px;background:#78c4d4;border-left:1px solid rgba(255,255,255,0.300);border-right:1px solid rgba(255,255,255,0.300);"></div>
<div style="left:462px;top:174px;width:13px;height:13px;background:#2150a0;border-left:1px solid rgba(255,255,255,0.300);border-right:1px solid rgba(255,255,255,0.300);"></div>
<div style="left:462px;top:187px;width:13px;height:12px;background:#1c3c7c;border-left:1px solid rgba(255,255,255,0.300);border-right:1px solid rgba(255,255,255,0.300);"></div>
<div style="left:479px;top:117px;width:13px;height:13px;background:#e4651c;border:1px solid rgba(226,228,231,0.900);"></div>
<div style="left:479px;top:135px;width:13px;height:64px;border:1px solid rgba(226,228,231,0.900);"></div>
<div style="left:479px;top:135px;width:13px;height:13px;background:#fdf5dc;border-left:1px solid rgba(255,255,255,0.300);border-right:1px solid rgba(255,255,255,0.300);"></div>
<div style="left:479px;top:148px;width:13px;height:13px;background:#fde49e;border-left:1px solid rgba(255,255,255,0.300);border-right:1px solid rgba(255,255,255,0.300);"></div>
<div style="left:479px;top:161px;width:13px;height:13px;background:#f2c45c;border-left:1px solid rgba(255,255,255,0.300);border-right:1px solid rgba(255,255,255,0.300);"></div>
<div style="left:479px;top:174px;width:13px;height:13px;background:#e0621c;border-left:1px solid rgba(255,255,255,0.300);border-right:1px solid rgba(255,255,255,0.300);"></div>
<div style="left:479px;top:187px;width:13px;height:12px;background:#9a4618;border-left:1px solid rgba(255,255,255,0.300);border-right:1px solid rgba(255,255,255,0.300);"></div>
<div style="left:496px;top:117px;width:13px;height:13px;background:#9c9ca2;border:1px solid rgba(226,228,231,0.900);"></div>
<div style="left:496px;top:135px;width:13px;height:64px;border:1px solid rgba(226,228,231,0.900);"></div>
<div style="left:496px;top:135px;width:13px;height:13px;background:#ececec;border-left:1px solid rgba(255,255,255,0.300);border-right:1px solid rgba(255,255,255,0.300);"></div>
<div style="left:496px;top:148px;width:13px;height:13px;background:#dadcdc;border-left:1px solid rgba(255,255,255,0.300);border-right:1px solid rgba(255,255,255,0.300);"></div>
<div style="left:496px;top:161px;width:13px;height:13px;background:#c6c6c6;border-left:1px solid rgba(255,255,255,0.300);border-right:1px solid rgba(255,255,255,0.300);"></div>
<div style="left:496px;top:174px;width:13px;height:13px;background:#7c7878;border-left:1px solid rgba(255,255,255,0.300);border-right:1px solid rgba(255,255,255,0.300);"></div>
<div style="left:496px;top:187px;width:13px;height:12px;background:#505458;border-left:1px solid rgba(255,255,255,0.300);border-right:1px solid rgba(255,255,255,0.300);"></div>
<div style="left:513px;top:117px;width:13px;height:13px;background:#f2c55c;border:1px solid rgba(226,228,231,0.900);"></div>
<div style="left:513px;top:135px;width:13px;height:64px;border:1px solid rgba(226,228,231,0.900);"></div>
<div style="left:513px;top:135px;width:13px;height:13px;background:#fff4d6;border-left:1px solid rgba(255,255,255,0.300);border-right:1px solid rgba(255,255,255,0.300);"></div>
<div style="left:513px;top:148px;width:13px;height:13px;background:#ffe6a0;border-left:1px solid rgba(255,255,255,0.300);border-right:1px solid rgba(255,255,255,0.300);"></div>
<div style="left:513px;top:161px;width:13px;height:13px;background:#f4c85c;border-left:1px solid rgba(255,255,255,0.300);border-right:1px solid rgba(255,255,255,0.300);"></div>
<div style="left:513px;top:174px;width:13px;height:13px;background:#e0621c;border-left:1px solid rgba(255,255,255,0.300);border-right:1px solid rgba(255,255,255,0.300);"></div>
<div style="left:513px;top:187px;width:13px;height:12px;background:#ae5a28;border-left:1px solid rgba(255,255,255,0.300);border-right:1px solid rgba(255,255,255,0.300);"></div>
<div style="left:530px;top:117px;width:13px;height:13px;background:#2ea4c8;border:1px solid rgba(226,228,231,0.900);"></div>
<div style="left:530px;top:135px;width:13px;height:64px;border:1px solid rgba(226,228,231,0.900);"></div>
<div style="left:530px;top:135px;width:13px;height:13px;background:#e3eff4;border-left:1px solid rgba(255,255,255,0.300);border-right:1px solid rgba(255,255,255,0.300);"></div>
<div style="left:530px;top:148px;width:13px;height:13px;background:#a4dcea;border-left:1px solid rgba(255,255,255,0.300);border-right:1px solid rgba(255,255,255,0.300);"></div>
<div style="left:530px;top:161px;width:13px;height:13px;background:#8ad2e0;border-left:1px solid rgba(255,255,255,0.300);border-right:1px solid rgba(255,255,255,0.300);"></div>
<div style="left:530px;top:174px;width:13px;height:13px;background:#1f62a8;border-left:1px solid rgba(255,255,255,0.300);border-right:1px solid rgba(255,255,255,0.300);"></div>
<div style="left:530px;top:187px;width:13px;height:12px;background:#18487c;border-left:1px solid rgba(255,255,255,0.300);border-right:1px solid rgba(255,255,255,0.300);"></div>
<div style="left:547px;top:117px;width:13px;height:13px;background:#7cba5c;border:1px solid rgba(226,228,231,0.900);"></div>
<div style="left:547px;top:135px;width:13px;height:64px;border:1px solid rgba(226,228,231,0.900);"></div>
<div style="left:547px;top:135px;width:13px;height:13px;background:#ebebe5;border-left:1px solid rgba(255,255,255,0.300);border-right:1px solid rgba(255,255,255,0.300);"></div>
<div style="left:547px;top:148px;width:13px;height:13px;background:#c0c8b4;border-left:1px solid rgba(255,255,255,0.300);border-right:1px solid rgba(255,255,255,0.300);"></div>
<div style="left:547px;top:161px;width:13px;height:13px;background:#8ccc74;border-left:1px solid rgba(255,255,255,0.300);border-right:1px solid rgba(255,255,255,0.300);"></div>
<div style="left:547px;top:174px;width:13px;height:13px;background:#586468;border-left:1px solid rgba(255,255,255,0.300);border-right:1px solid rgba(255,255,255,0.300);"></div>
<div style="left:547px;top:187px;width:13px;height:12px;background:#2c3c4c;border-left:1px solid rgba(255,255,255,0.300);border-right:1px solid rgba(255,255,255,0.300);"></div>
<div style="left:392px;top:203px;width:170px;height:23px;background:#e9ebeb;"></div>
<span class="t" style="left:399.65px;top:206.50px;font-size:12px;line-height:16px;color:#505052;font-weight:700;transform:scaleX(0.9405);-webkit-text-stroke-width:0;">Standard Colors</span>
<div style="left:394px;top:228px;width:13px;height:13px;background:#e0601c;border:1px solid rgba(226,228,231,0.900);"></div>
<div style="left:411px;top:228px;width:13px;height:13px;background:#e0621c;border:1px solid rgba(226,228,231,0.900);"></div>
<div style="left:428px;top:228px;width:13px;height:13px;background:#f2c45c;border:1px solid rgba(226,228,231,0.900);"></div>
<div style="left:445px;top:228px;width:13px;height:13px;background:#f4c85c;border:1px solid rgba(226,228,231,0.900);"></div>
<div style="left:462px;top:228px;width:13px;height:13px;background:#8ccc70;border:1px solid rgba(226,228,231,0.900);"></div>
<div style="left:479px;top:228px;width:13px;height:13px;background:#0c7c6c;border:1px solid rgba(226,228,231,0.900);"></div>
<div style="left:496px;top:228px;width:13px;height:13px;background:#18a8c0;border:1px solid rgba(226,228,231,0.900);"></div>
<div style="left:513px;top:228px;width:13px;height:13px;background:#1c70a8;border:1px solid rgba(226,228,231,0.900);"></div>
<div style="left:530px;top:228px;width:13px;height:13px;background:#14285c;border:1px solid rgba(226,228,231,0.900);"></div>
<div style="left:547px;top:228px;width:13px;height:13px;background:#3c58a8;border:1px solid rgba(226,228,231,0.900);"></div>
<div style="left:396px;top:247px;width:16px;height:16px;background:#ffffff;border:1px solid #dcdcdc;"></div>
<div style="left:423.36px;top:261px;width:9.05px;height:1px;background:#3a3a3a;"></div>
<span class="t" style="left:423.36px;top:247.00px;font-size:12px;line-height:16px;color:#3a3a3a;font-weight:400;transform:scaleX(1.0439);-webkit-text-stroke-width:0.100px;">No Fill</span>
<div style="left:392px;top:267px;width:171px;height:1px;background:#e1e1e1;"></div>
<svg class="i" style="left:396px;top:273px;" width="16" height="16" viewBox="0 0 16 16"><circle cx="8" cy="8" r="7.600" fill="#f2c45c"/><path d="M8 8L8 0.400A7.600 7.600 0 0 1 15.200 5.600z" fill="#f0d890"/><path d="M8 8L15.200 5.600A7.600 7.600 0 0 1 12.500 14.200z" fill="#8fc8a8"/><path d="M8 8L12.500 14.200A7.600 7.600 0 0 1 3.500 14.200z" fill="#4472c4"/><path d="M8 8L3.500 14.200A7.600 7.600 0 0 1 0.800 5.600z" fill="#e0621c"/><path d="M8 8L0.800 5.600A7.600 7.600 0 0 1 8 0.400z" fill="#e88a3c"/><path d="M8 8L8 0.400M8 8L15.200 5.600M8 8L12.500 14.200M8 8L3.500 14.200M8 8L0.800 5.600" stroke="#fff" stroke-width="0.900"/></svg>
<div style="left:423.40px;top:287px;width:9.97px;height:1px;background:#3a3a3a;"></div>
<span class="t" style="left:423.40px;top:273.00px;font-size:12px;line-height:16px;color:#3a3a3a;font-weight:400;transform:scaleX(0.9974);-webkit-text-stroke-width:0.100px;">More Fill Colors...</span>
<svg class="i" style="left:397px;top:298px;" width="15" height="14" viewBox="0 0 15 14"><rect x="0.500" y="0.500" width="13.500" height="12.500" fill="#fff" stroke="#6a625c" stroke-width="1"/><path d="M2 11.500V9.500L5 6.500l2.500 2.500 1.500-1.500 3 3v1z" fill="#4472c4"/><circle cx="10" cy="4" r="1.300" fill="#f2c45c"/></svg>
<div style="left:423.39px;top:311px;width:8.07px;height:1px;background:#3a3a3a;"></div>
<span class="t" style="left:423.39px;top:297.00px;font-size:12px;line-height:16px;color:#3a3a3a;font-weight:400;transform:scaleX(1.0077);-webkit-text-stroke-width:0.100px;">Picture...</span>
<div style="left:392px;top:317px;width:171px;height:24px;background:#c6c6c6;"></div>
<svg class="i" style="left:397px;top:322px;" width="15" height="14" viewBox="0 0 15 14"><defs><linearGradient id="gi" x1="0" y1="0" x2="1" y2="1"><stop offset="0" stop-color="#fbfbfb"/><stop offset="1" stop-color="#7e7e7e"/></linearGradient></defs><rect x="0.500" y="0.500" width="13.500" height="12.500" fill="url(#gi)" stroke="#6a625c" stroke-width="1"/></svg>
<div style="left:423.78px;top:335px;width:9.23px;height:1px;background:#3a3a3a;"></div>
<span class="t" style="left:423.78px;top:321.00px;font-size:12px;line-height:16px;color:#3a3a3a;font-weight:400;transform:scaleX(0.9887);-webkit-text-stroke-width:0.100px;">Gradient</span>
<svg class="i" style="left:549px;top:325px;" width="4" height="8" viewBox="0 0 4 8"><path d="M0 0L4 4 0 8z" fill="#5a5a5a"/></svg>
<svg class="i" style="left:397px;top:346px;" width="15" height="14" viewBox="0 0 15 14"><rect x="0.500" y="0.500" width="13.500" height="12.500" fill="#fff" stroke="#6a625c" stroke-width="1"/><rect x="2.2" y="2.2" width="1.300" height="1.300" fill="#4472c4"/><rect x="4.8" y="2.2" width="1.300" height="1.300" fill="#4472c4"/><rect x="7.4" y="2.2" width="1.300" height="1.300" fill="#4472c4"/><rect x="10.0" y="2.2" width="1.300" height="1.300" fill="#4472c4"/><rect x="3.5" y="4.7" width="1.300" height="1.300" fill="#4472c4"/><rect x="6.1" y="4.7" width="1.300" height="1.300" fill="#4472c4"/><rect x="8.7" y="4.7" width="1.300" height="1.300" fill="#4472c4"/><rect x="11.3" y="4.7" width="1.300" height="1.300" fill="#4472c4"/><rect x="2.2" y="7.2" width="1.300" height="1.300" fill="#4472c4"/><rect x="4.8" y="7.2" width="1.300" height="1.300" fill="#4472c4"/><rect x="7.4" y="7.2" width="1.300" height="1.300" fill="#4472c4"/><rect x="10.0" y="7.2" width="1.300" height="1.300" fill="#4472c4"/><rect x="3.5" y="9.7" width="1.300" height="1.300" fill="#4472c4"/><rect x="6.1" y="9.7" width="1.300" height="1.300" fill="#4472c4"/><rect x="8.7" y="9.7" width="1.300" height="1.300" fill="#4472c4"/><rect x="11.3" y="9.7" width="1.300" height="1.300" fill="#4472c4"/></svg>
<div style="left:424.15px;top:359px;width:7.41px;height:1px;background:#3a3a3a;"></div>
<span class="t" style="left:424.15px;top:345.00px;font-size:12px;line-height:16px;color:#3a3a3a;font-weight:400;transform:scaleX(1.0113);-webkit-text-stroke-width:0.100px;">Texture</span>
<svg class="i" style="left:549px;top:349px;" width="4" height="8" viewBox="0 0 4 8"><path d="M0 0L4 4 0 8z" fill="#5a5a5a"/></svg>
<div style="left:562px;top:317px;width:241px;height:257px;background:#ffffff;border:1px solid #cfcfcf;box-shadow:2px 2px 3px rgba(0,0,0,0.170);"></div>
<div style="left:564px;top:319px;width:220px;height:22px;background:#e9ebeb;"></div>
<span class="t" style="left:572.29px;top:322.00px;font-size:12px;line-height:16px;color:#505052;font-weight:700;transform:scaleX(0.9963);-webkit-text-stroke-width:0;">No Gradient</span>
<div style="left:564px;top:341px;width:44px;height:44px;background:#d6d6d6;border:1px solid #807a76;"></div>
<div style="left:568px;top:345px;width:36px;height:36px;background:#8c8c90;border:1px solid #5e5e5e;border-radius:5px;"></div>
<div style="left:564px;top:385px;width:220px;height:22px;background:#e9ebeb;"></div>
<span class="t" style="left:573.04px;top:388.00px;font-size:12px;line-height:16px;color:#505052;font-weight:700;transform:scaleX(0.9628);-webkit-text-stroke-width:0;">Variations</span>
<div style="left:568px;top:411px;width:36px;height:36px;background:linear-gradient(135deg,#a9a9ad 0%,#e9e9e9 55%,#f3f3f3 100%);border:1px solid #6c6c6c;border-radius:5px;"></div>
<div style="left:612px;top:411px;width:36px;height:36px;background:linear-gradient(180deg,#a2a2a8 0%,#dedede 50%,#f6f6f6 100%);border:1px solid #6c6c6c;border-radius:5px;"></div>
<div style="left:656px;top:411px;width:36px;height:36px;background:linear-gradient(225deg,#a9a9ad 0%,#e6e6e6 55%,#f3f3f3 100%);border:1px solid #6c6c6c;border-radius:5px;"></div>
<div style="left:700px;top:411px;width:36px;height:36px;background:radial-gradient(circle at 100% 100%,#9c9ca2 0%,#d4d4d4 45%,#f3f3f3 100%);border:1px solid #6c6c6c;border-radius:5px;"></div>
<div style="left:744px;top:411px;width:36px;height:36px;background:radial-gradient(circle at 0% 100%,#9c9ca2 0%,#d4d4d4 45%,#f3f3f3 100%);border:1px solid #6c6c6c;border-radius:5px;"></div>
<div style="left:568px;top:455px;width:36px;height:36px;background:linear-gradient(90deg,#a2a2a8 0%,#dedede 50%,#f6f6f6 100%);border:1px solid #6c6c6c;border-radius:5px;"></div>
<div style="left:612px;top:455px;width:36px;height:36px;background:radial-gradient(circle at 50% 50%,#9a9aa0 0%,#c8c8c8 35%,#f1f1f1 80%);border:1px solid #6c6c6c;border-radius:5px;"></div>
<div style="left:656px;top:455px;width:36px;height:36px;background:linear-gradient(270deg,#a2a2a8 0%,#dedede 50%,#f6f6f6 100%);border:1px solid #6c6c6c;border-radius:5px;"></div>
<div style="left:700px;top:455px;width:36px;height:36px;background:radial-gradient(circle at 100% 0%,#9c9ca2 0%,#d4d4d4 45%,#f3f3f3 100%);border:1px solid #6c6c6c;border-radius:5px;"></div>
<div style="left:744px;top:455px;width:36px;height:36px;background:radial-gradient(circle at 0% 0%,#9c9ca2 0%,#d4d4d4 45%,#f3f3f3 100%);border:1px solid #6c6c6c;border-radius:5px;"></div>
<div style="left:568px;top:499px;width:36px;height:36px;background:linear-gradient(45deg,#a9a9ad 0%,#e6e6e6 55%,#f3f3f3 100%);border:1px solid #6c6c6c;border-radius:5px;"></div>
<div style="left:612px;top:499px;width:36px;height:36px;background:linear-gradient(0deg,#a2a2a8 0%,#dedede 50%,#f6f6f6 100%);border:1px solid #6c6c6c;border-radius:5px;"></div>
<div style="left:656px;top:499px;width:36px;height:36px;background:linear-gradient(315deg,#a9a9ad 0%,#e6e6e6 55%,#f3f3f3 100%);border:1px solid #6c6c6c;border-radius:5px;"></div>
<div style="left:564px;top:539px;width:238px;height:1px;background:#e1e1e1;"></div>
<div style="left:564px;top:541px;width:238px;height:24px;background:#c6c6c6;"></div>
<svg class="i" style="left:570px;top:546px;" width="13" height="13" viewBox="0 0 13 13"><defs><linearGradient id="gj" x1="0" y1="0" x2="1" y2="1"><stop offset="0" stop-color="#fbfbfb"/><stop offset="1" stop-color="#8a8a8a"/></linearGradient></defs><rect x="0.500" y="0.500" width="12" height="12" fill="url(#gj)" stroke="#6a625c" stroke-width="1"/></svg>
<div style="left:595.41px;top:559px;width:9.91px;height:1px;background:#3a3a3a;"></div>
<span class="t" style="left:595.41px;top:545.00px;font-size:12px;line-height:16px;color:#3a3a3a;font-weight:400;transform:scaleX(0.9909);-webkit-text-stroke-width:0.100px;">More Gradients...</span>
<div style="left:674px;top:568px;width:2px;height:1px;background:#b4b4b4;"></div>
<div style="left:678px;top:568px;width:2px;height:1px;background:#b4b4b4;"></div>
<div style="left:682px;top:568px;width:2px;height:1px;background:#b4b4b4;"></div>
<div style="left:686px;top:568px;width:2px;height:1px;background:#b4b4b4;"></div>
<span class="t" style="left:6.78px;top:711.35px;font-size:11.3px;line-height:15.3px;color:#2e2e2e;font-weight:400;transform:scaleX(0.9774);">Page 1 of 1</span>
<span class="t" style="left:83.84px;top:711.35px;font-size:11.3px;line-height:15.3px;color:#2e2e2e;font-weight:400;transform:scaleX(1.0371);">4 of 4 words</span>
<svg class="i" style="left:167px;top:710px;" width="15" height="14" viewBox="0 0 15 14"><path d="M6.500 2.500C5 1.200 2.500 1 0.800 1.500v9.500c1.700-0.500 4.200-0.300 5.700 1zM6.500 2.500C8 1.200 9.500 1 11 1.300M6.500 12c1-0.800 2-1.100 3-1.200" fill="none" stroke="#6a625c" stroke-width="1"/><path d="M8.800 7.500l1.800 2 3.600-5" fill="none" stroke="#6a625c" stroke-width="1.200"/></svg>
<span class="t" style="left:198.33px;top:711.35px;font-size:11.3px;line-height:15.3px;color:#2e2e2e;font-weight:400;transform:scaleX(1.0306);">English (United Kingdom)</span>
<svg class="i" style="left:1079px;top:710px;" width="14" height="14" viewBox="0 0 14 14"><path d="M0.500 0.500H5L6.500 1.600 8 0.500H12.500V10.500H8L6.500 12.600 5 10.500H0.500z" fill="none" stroke="#6a625c" stroke-width="1"/><path d="M6.500 2v10" stroke="#6a625c" stroke-width="0.900"/><path d="M2 2.500h3M2 4.500h3M2 6.500h3M2 8.500h3M8 2.500h3M8 4.500h3M8 6.500h3M8 8.500h3" stroke="#6a625c" stroke-width="1"/></svg>
<div style="left:1106px;top:707px;width:40px;height:21px;background:#c6c6c6;"></div>
<svg class="i" style="left:1119px;top:710px;" width="14" height="14" viewBox="0 0 14 14"><rect x="0.500" y="0.500" width="13" height="12" fill="none" stroke="#6a625c" stroke-width="1.100"/><path d="M2.500 2.500h9M2.500 4.500h9M2.500 6.500h9M2.500 8.500h9M2.500 10.500h9" stroke="#6a625c" stroke-width="1"/></svg>
<svg class="i" style="left:1159px;top:710px;" width="15" height="14" viewBox="0 0 15 14"><path d="M8 11.500H0.500V0.500h11v6" fill="none" stroke="#6a625c" stroke-width="1"/><path d="M2.500 2.500h7M2.500 4.500h7M2.500 6.500h4.500M2.500 8.500h3.500" stroke="#6a625c" stroke-width="1"/><circle cx="10.800" cy="9.800" r="3.700" fill="#8a8a8a" stroke="#6e6e6e" stroke-width="0.800"/><path d="M8.500 8.500c1 0.500 1.500 1.500 1 3M11 7c0 1 1 1.500 2.500 1.500" stroke="#f0f0f0" stroke-width="0.800" fill="none"/></svg>
<div style="left:1192px;top:716px;width:8px;height:1px;background:#444;"></div>
<div style="left:1205px;top:716px;width:100px;height:1px;background:#9a9a9a;"></div>
<div style="left:1253px;top:712px;width:5px;height:11px;background:#5e5e5e;"></div>
<svg class="i" style="left:1310px;top:712px;" width="9" height="9" viewBox="0 0 9 9"><path d="M0 4.500h8M4 0.500v8" stroke="#444" stroke-width="1"/></svg>
<span class="t" style="left:1331.38px;top:711.35px;font-size:11.3px;line-height:15.3px;color:#2e2e2e;font-weight:400;transform:scaleX(0.9318);">100%</span>
<div style="left:442px;top:728px;width:44px;height:40px;background:#556772;"></div>
<div style="left:486px;top:728px;width:4px;height:40px;background:#2c3e4a;"></div>
<div style="left:152px;top:766px;width:40px;height:2px;background:#76c4d8;"></div>
<div style="left:201px;top:766px;width:40px;height:2px;background:#76c4d8;"></div>
<div style="left:250px;top:766px;width:32px;height:2px;background:#76c4d8;"></div>
<div style="left:348px;top:766px;width:32px;height:2px;background:#76c4d8;"></div>
<div style="left:397px;top:766px;width:40px;height:2px;background:#76c4d8;"></div>
<div style="left:442px;top:766px;width:48px;height:2px;background:#76c4d8;"></div>
<div style="left:283px;top:766px;width:7px;height:2px;background:#5fa4b8;"></div>
<div style="left:381px;top:766px;width:7px;height:2px;background:#5fa4b8;"></div>
<svg class="i" style="left:15px;top:739px;" width="18" height="18" viewBox="0 0 18 18"><path d="M0.600 3L7.600 2v6.500H0.600zM8.600 1.900L17.400 0.600V8.500H8.600zM0.600 9.500H7.600V16L0.600 15zM8.600 9.500H17.400V17.400L8.600 16.100z" fill="#fff"/></svg>
<svg class="i" style="left:63px;top:740px;" width="18" height="16" viewBox="0 0 18 16"><path d="M0.500 0.500h10.500M0.500 15.500h10.500M2 4.500h8v7.500H2z" fill="none" stroke="#fff" stroke-width="1.200"/><path d="M1 0.500v2.500M10.500 0.500v2.500M1 13v2.500M10.500 13v2.500M14.500 0.500v15" stroke="#fff" stroke-width="1.200"/><rect x="13.200" y="3.200" width="3.200" height="3" fill="#fff"/></svg>
<svg class="i" style="left:111px;top:736px;" width="24" height="24" viewBox="0 0 24 24"><path d="M7 7V3.500a2 2 0 0 1 2-2h5.500a2 2 0 0 1 2 2V7" fill="none" stroke="#e8e8e8" stroke-width="1.500"/><path d="M0.500 6.500h22.500v15.500a1.500 1.500 0 0 1-1.500 1.500H2a1.500 1.500 0 0 1-1.500-1.500z" fill="#f2f2f2"/><rect x="7.200" y="10.800" width="4" height="4" fill="#e0621c"/><rect x="12.200" y="10.800" width="4" height="4" fill="#8ccc70"/><rect x="7.200" y="15.800" width="4" height="4" fill="#18a8c0"/><rect x="12.200" y="15.800" width="4" height="4" fill="#f2c45c"/></svg>
<svg class="i" style="left:159px;top:736px;" width="26" height="24" viewBox="0 0 26 24"><path d="M1 9L13 0.800 25 9z" fill="#1f5fa8"/><rect x="1" y="8.500" width="24" height="14.500" fill="#2aa4c4"/><path d="M3.500 8.500h19L13 16z" fill="#f4f4f4"/><path d="M1 23L13 14 25 23z" fill="#58c0d8"/><path d="M1 9v14l9-7zM25 9v14l-9-7z" fill="#1c94b8"/></svg>
<svg class="i" style="left:209px;top:735px;" width="25" height="26" viewBox="0 0 25 26"><defs><linearGradient id="eg" x1="0" y1="0" x2="1" y2="0.300"><stop offset="0" stop-color="#2b9cc6"/><stop offset="0.600" stop-color="#3ab4d0"/><stop offset="0.850" stop-color="#8ad078"/><stop offset="1" stop-color="#a8d868"/></linearGradient></defs><circle cx="12.300" cy="13" r="12" fill="url(#eg)"/><path d="M0.600 10.500C3 7.500 6.500 6.500 10 7.500c-3.500 2-5 5.500-3.500 9.500 1.500 4 5.500 6.500 10 6.500 2 0 4-0.500 5.500-1.500A12 12 0 0 1 0.600 10.500z" fill="#2259a8"/><path d="M10 7.500c-3.500 2-5 5.500-3.500 9.500 1.500 4 5.500 6.500 10 6.500 2 0 4-0.500 5.500-1.500-3 0.500-6.500-0.500-8.500-3-2-2.500-2-5.500-0.500-8-1-1.500-2-2.500-3-3.500z" fill="#1d4a98"/><path d="M13 11c-1.500 2.500-1.500 5.500 0.500 8 2 2.500 5.500 3.500 8.500 3 1.200-1.200 2-2.600 2.500-4.200-1.800 1.200-4.400 1.400-6.300 0.200-1.200-0.800-1.700-2-1.300-3.300 0.300-1 0.100-2.200-1-3-0.900-0.600-2-0.900-2.900-0.700z" fill="#20343e"/></svg>
<svg class="i" style="left:258px;top:738px;" width="23" height="20" viewBox="0 0 23 20"><path d="M0.500 3.500a1.500 1.500 0 0 1 1.500-1.500h6l2 2h11.500a1 1 0 0 1 1 1V18a1 1 0 0 1-1 1H1.500a1 1 0 0 1-1-1z" fill="#f2c45c"/><rect x="0.500" y="1" width="8" height="2.500" fill="#e0621c"/><path d="M0.500 7h22v11a1 1 0 0 1-1 1H1.500a1 1 0 0 1-1-1z" fill="#f6d070"/><path d="M4.500 19v-6.500h14V19h-3.500v-3.500h-7V19z" fill="#38a8d0"/><rect x="8" y="15.500" width="7" height="3.500" fill="#e8b040"/></svg>
<svg class="i" style="left:309px;top:736px;" width="19" height="23" viewBox="0 0 19 23"><rect x="0.500" y="0.500" width="17.500" height="21.500" rx="1.500" fill="#2a62b0" stroke="#1c4890" stroke-width="1"/><rect x="1" y="16.500" width="16.500" height="4" fill="#3a98cc"/><text x="9.300" y="11.500" text-anchor="middle" font-family="Liberation Sans,sans-serif" font-size="6.800" fill="#dbe6f4">LMS</text><path d="M5.500 18.500h2.500M9 18.500h5" stroke="#c4e4f4" stroke-width="1.200"/></svg>
<svg class="i" style="left:356px;top:737px;" width="24" height="23" viewBox="0 0 24 23"><rect x="0.500" y="0.500" width="22.500" height="22" rx="1" fill="#2ab0d0"/><path d="M0.500 22.500V13L7.500 7l8 8 3.500-3 4 4v6.500z" fill="#1f4f9c"/><path d="M15.500 15L19 12l4 4v6.500h-2z" fill="#4a78c4"/><circle cx="16" cy="5.500" r="2.200" fill="#f4f4f4"/></svg>
<svg class="i" style="left:406px;top:736px;" width="23" height="23" viewBox="0 0 23 23"><circle cx="11.500" cy="11.500" r="11" fill="#e0621c"/><path d="M11.500 11.500L1.900 6A11 11 0 0 0 8.500 22.100z" fill="#0c7c6c"/><path d="M11.500 11.500L8.500 22.100A11 11 0 0 0 22.500 11.500 11 11 0 0 0 21.800 7.500H11.500z" fill="#f2c45c"/><circle cx="11.500" cy="11.500" r="5.200" fill="#f0f0f0"/><circle cx="11.500" cy="11.500" r="4" fill="#48a8d8"/></svg>
<svg class="i" style="left:453px;top:736px;" width="26" height="23" viewBox="0 0 26 23"><rect x="6.500" y="0.500" width="18.500" height="22" rx="1.500" fill="#2a90c8"/><rect x="6.500" y="0.500" width="18.500" height="5.800" fill="#38b0d8"/><rect x="6.500" y="11.800" width="18.500" height="5.500" fill="#2460b0"/><rect x="6.500" y="17.300" width="18.500" height="5.200" fill="#1c4a94"/><rect x="0.500" y="5.500" width="12.500" height="12.500" rx="1" fill="#1f5fb4"/><text x="6.800" y="15.300" text-anchor="middle" font-family="Liberation Sans,sans-serif" font-weight="700" font-size="10" fill="#fff">W</text></svg>
<svg class="i" style="left:1195px;top:744px;" width="13" height="8" viewBox="0 0 13 8"><path d="M0.700 7.300L6.500 1.200l5.800 6.100" fill="none" stroke="#fff" stroke-width="1.300"/></svg>
<span class="t" style="left:1218.57px;top:740.00px;font-size:12px;line-height:16px;color:#ffffff;font-weight:400;transform:scaleX(0.9326);">ENG</span>
<span class="t" style="left:1260.01px;top:731.00px;font-size:12px;line-height:16px;color:#ffffff;font-weight:400;transform:scaleX(0.9702);">5:33 PM</span>
<span class="t" style="left:1257.68px;top:749.00px;font-size:12px;line-height:16px;color:#ffffff;font-weight:400;transform:scaleX(0.9920);">6/5/2021</span>
<svg class="i" style="left:1325px;top:740px;" width="17" height="16" viewBox="0 0 17 16"><path d="M0.600 0.600h15.500v11.500h-5.500l-2.400 3-2.400-3H0.600z" fill="none" stroke="#fff" stroke-width="1.200"/></svg>
<div style="left:1361px;top:728px;width:1px;height:40px;background:#5a6478;"></div>
</body></html>
